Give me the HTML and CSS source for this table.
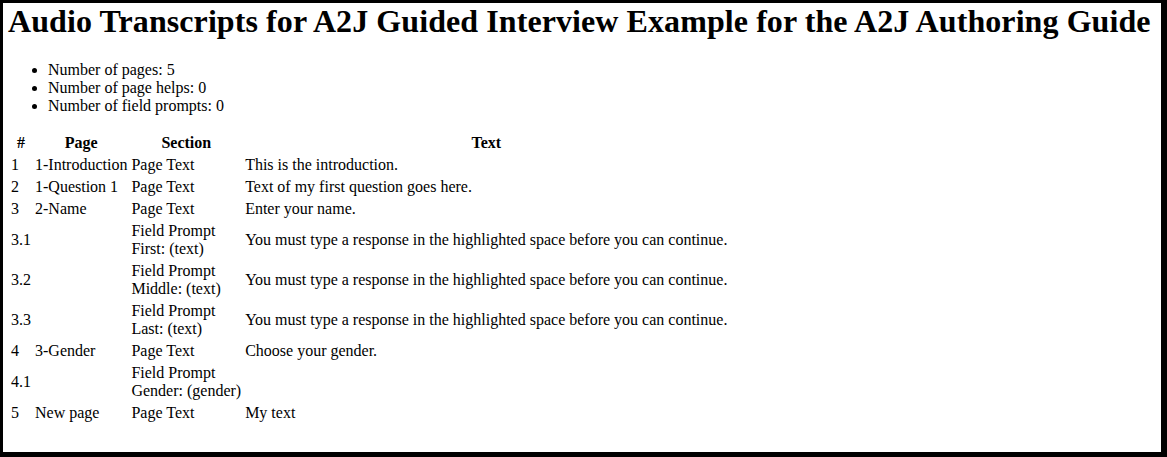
FILE: index.html
```html
<!DOCTYPE html>
<html>
<head>
<meta charset="utf-8">
<title>Audio Transcripts</title>
<link rel="stylesheet" href="styles.css">
</head>
<body>
<div class="frame">
<h1 class="title">Audio Transcripts for A2J Guided Interview Example for the A2J Authoring Guide</h1>
<ul class="stats">
<li>Number of pages: 5</li>
<li>Number of page helps: 0</li>
<li>Number of field prompts: 0</li>
</ul>
<table class="transcripts">
<thead>
<tr><th>#</th><th>Page</th><th>Section</th><th>Text</th></tr>
</thead>
<tbody>
<tr><td>1</td><td>1-Introduction</td><td>Page Text</td><td>This is the introduction.</td></tr>
<tr><td>2</td><td>1-Question 1</td><td>Page Text</td><td>Text of my first question goes here.</td></tr>
<tr><td>3</td><td>2-Name</td><td>Page Text</td><td>Enter your name.</td></tr>
<tr><td>3.1</td><td></td><td>Field Prompt<br>First: (text)</td><td>You must type a response in the highlighted space before you can continue.</td></tr>
<tr><td>3.2</td><td></td><td>Field Prompt<br>Middle: (text)</td><td>You must type a response in the highlighted space before you can continue.</td></tr>
<tr><td>3.3</td><td></td><td>Field Prompt<br>Last: (text)</td><td>You must type a response in the highlighted space before you can continue.</td></tr>
<tr><td>4</td><td>3-Gender</td><td>Page Text</td><td>Choose your gender.</td></tr>
<tr><td>4.1</td><td></td><td>Field Prompt<br>Gender: (gender)</td><td></td></tr>
<tr><td>5</td><td>New page</td><td>Page Text</td><td>My text</td></tr>
</tbody>
</table>
</div>
</body>
</html>
```
FILE: styles.css
```css
html, body {
  margin: 0;
  padding: 0;
  background: #000;
}
body {
  font-family: "Liberation Serif", "Times New Roman", serif;
  font-size: 16px;
  line-height: 18px;
  color: #000;
}
.frame {
  box-sizing: border-box;
  height: 457px;
  border-style: solid;
  border-color: #000;
  border-width: 3px 6px 5px 3px;
  background: #fff;
  padding: 0 0 0 5px;
  overflow: hidden;
}
.title {
  font-size: 32px;
  line-height: 37px;
  font-weight: bold;
  letter-spacing: 0.08px;
  margin: 0 0 21.44px 0;
  white-space: nowrap;
}
.stats {
  margin: 16px 0;
  padding-left: 40px;
}
.transcripts {
  border-collapse: separate;
  border-spacing: 2px;
}
.transcripts th,
.transcripts td {
  padding: 1px;
  vertical-align: middle;
}
.transcripts th {
  font-weight: bold;
  text-align: center;
}
.transcripts td {
  text-align: left;
}
```
